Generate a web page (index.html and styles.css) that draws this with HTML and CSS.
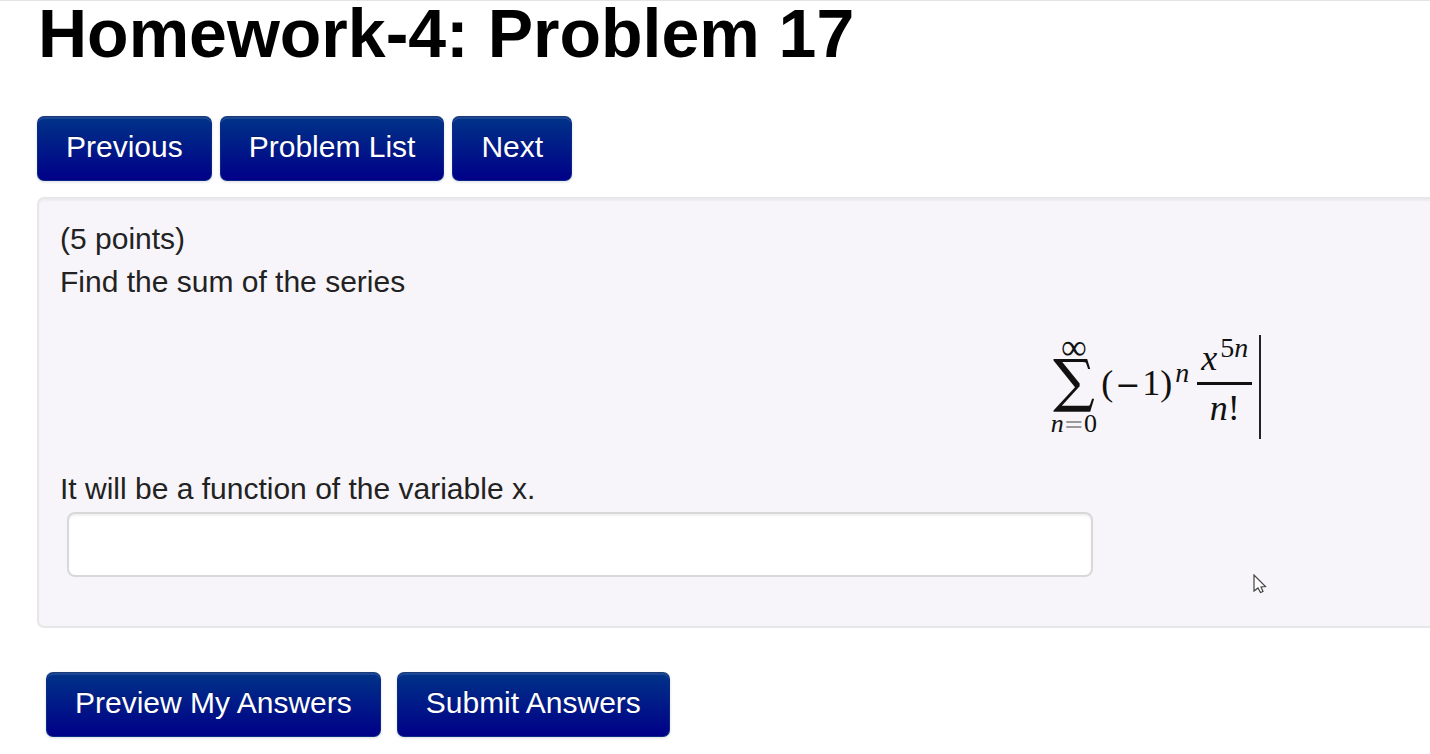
FILE: index.html
```html
<!DOCTYPE html>
<html lang="en">
<head>
  <meta charset="UTF-8">
  <meta name="viewport" content="width=device-width, initial-scale=1.0">
  <title>Homework-4: Problem 17</title>
  <link rel="stylesheet" href="styles.css">
</head>
<body>
  <main class="page">
    <h1>Homework-4: Problem 17</h1>

    <nav class="nav-buttons">
      <a class="btn" href="#previous">Previous</a>
      <a class="btn" href="#list">Problem List</a>
      <a class="btn" href="#next">Next</a>
    </nav>

    <form>
      <div class="problem">
        <p>(5 points)</p>
        <p>Find the sum of the series</p>

        <div class="formula">
          <div class="math">
            <div class="sum">
              <span class="infinity">∞</span>
              <span class="sigma">∑</span>
              <span class="limit"><i>n</i><span class="equals">=</span>0</span>
            </div>
            <div class="term">(<span class="minus">−</span>1)<sup><i>n</i></sup></div>
            <div class="fraction">
              <span class="top"><i>x</i><sup>5<i>n</i></sup></span>
              <span class="bottom"><i>n</i>!</span>
            </div>
          </div>
        </div>

        <label for="answer">It will be a function of the variable x.</label>
        <input type="text" id="answer" class="answer">
      </div>

      <div class="submit-buttons">
        <button type="button" class="btn">Preview My Answers</button>
        <button type="submit" class="btn">Submit Answers</button>
      </div>
    </form>
  </main>

  <svg class="cursor" width="14" height="20" viewBox="0 0 14 20">
    <path d="M1 1V17L5 14L7.5 18.500L10 17.500L8 13L12.500 12.500Z" fill="#fff" stroke="#444" stroke-width="1.200"/>
  </svg>
</body>
</html>
```

FILE: styles.css
```css
* {
  box-sizing: border-box;
}

body {
  margin: 0;
  border-top: 1px solid #e4e4e6;
  background: #fff;
  color: #222;
  font-family: "Liberation Sans", Arial, sans-serif;
  font-size: 30px;
  line-height: 43px;
  overflow-x: hidden;
}

.page {
  padding-left: 37px;
}

h1 {
  margin: 0;
  padding: 0 0 51px 1px;
  color: #000;
  font-size: 68px;
  line-height: 64px;
}

p {
  margin: 0;
}

.nav-buttons,
.submit-buttons {
  display: flex;
  gap: 8px;
}

.btn {
  padding: 8px 28px 12px;
  border: 1px solid #0a2a86;
  border-top-color: #1c3a78;
  border-radius: 7px;
  background: linear-gradient(#003388, #000088);
  box-shadow: inset 0 2px 0 rgba(255, 255, 255, 0.1), 0 1px 3px rgba(0, 0, 60, 0.15);
  color: #fff;
  font-family: inherit;
  font-size: 30px;
  line-height: 43px;
  text-decoration: none;
  text-shadow: 0 -1px 0 rgba(0, 0, 0, 0.25);
  cursor: pointer;
}

.btn:hover {
  background: #000088;
}

/* the problem box is wider than the window */
.problem {
  width: 160%;
  margin-top: 16px;
  padding: 18px 21px 49px;
  border: 2px solid #e7e7e9;
  border-radius: 7px;
  background: #f7f5f9;
  box-shadow: inset 0 2px 2px rgba(0, 0, 0, 0.04);
}

.formula {
  display: flex;
  justify-content: center;
  padding: 32px 0 28px 8px;
}

.math {
  display: flex;
  align-items: center;
  height: 104px;
  padding-right: 7px;
  border-right: 2px solid #222;
  color: #111;
  font-family: "Liberation Serif", "Times New Roman", serif;
  font-size: 36px;
  line-height: 36px;
}

.math sup {
  padding-left: 3px;
  font-size: 28px;
  line-height: 0;
}

.sum {
  display: flex;
  flex-direction: column;
  align-items: center;
}

.infinity {
  font-size: 36px;
  line-height: 20px;
}

.sigma {
  font-family: "DejaVu Math TeX Gyre", "Liberation Serif", serif;
  font-size: 50px;
  line-height: 54px;
}

.limit {
  font-size: 26px;
  line-height: 26px;
}

.equals,
.minus {
  font-family: "DejaVu Serif", serif;
  line-height: 0;
}

.equals {
  color: #999;
  font-size: 24px;
}

.term {
  margin-left: 3px;
  padding-bottom: 8px;
}

.minus {
  padding: 0 2px;
  font-size: 30px;
}

.fraction {
  display: flex;
  flex-direction: column;
  align-items: center;
  margin-left: 8px;
  padding-bottom: 8px;
}

.top {
  padding: 0 4px 6px;
  border-bottom: 3px solid #111;
}

.bottom {
  padding-top: 5px;
}

label {
  display: block;
}

.answer {
  display: block;
  width: 47%;
  height: 65px;
  margin: 2px 0 0 7px;
  padding: 8px 12px;
  border: 2px solid #d8d7da;
  border-radius: 8px;
  background: #fff;
  box-shadow: inset 0 2px 2px rgba(0, 0, 0, 0.06);
  font: inherit;
}

.submit-buttons {
  gap: 16px;
  padding: 44px 0 17px 9px;
}

.cursor {
  position: absolute;
  top: 574px;
  left: 1253px;
}
```
